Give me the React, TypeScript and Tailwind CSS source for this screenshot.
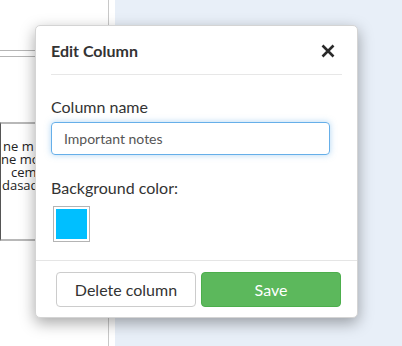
import React from "react";

export default function App() {
  return (
    <div className="relative w-[402px] h-[346px] overflow-hidden bg-white" style={{ fontFamily: "Lato, 'Open Sans', sans-serif" }}>
      {/* background page */}
      <div className="flex h-full">
        <div className="w-[109px] h-full border-r border-[#c8c8c8] bg-white flex flex-col">
          <div className="h-[50px]" />
          <div className="h-[7px] border-y border-[#b5b5b5]" />
          <div className="h-[65px]" />
          <div className="h-[119px] border-y-[2px] border-[#b8b8b8] border-l border-l-[#555] pt-[16px]">
            <div className="w-[34px] overflow-hidden text-[13px] leading-[13px] text-[#222]" style={{ fontFamily: "'Open Sans', sans-serif" }}>
              <div className="whitespace-nowrap pl-[2px]">ne m</div>
              <div className="whitespace-nowrap">ne mo</div>
              <div className="whitespace-nowrap pl-[10px]">cem</div>
              <div className="whitespace-nowrap pl-[1px]">dasad</div>
            </div>
          </div>
        </div>
        <div className="w-[6px] bg-white" />
        <div className="flex-1 h-full bg-[#e8eff8]" />
      </div>

      {/* modal */}
      <div className="absolute left-[35px] top-[25px] w-[323px] bg-white rounded-[5px] border border-[#d4d4d4] shadow-[0_5px_15px_rgba(0,0,0,0.35)]">
        <div className="mx-[15px] border-b border-[#e7e7e7] pt-[15px] pb-[13px] flex items-center justify-between">
          <span className="text-[16px] leading-[20px] font-bold text-[#333]">Edit Column</span>
          <svg width="14" height="14" viewBox="0 0 14 14" className="mr-[7px]">
            <path d="M1.5 1.5 L12.5 12.5 M12.5 1.5 L1.5 12.5" stroke="#2a2a2a" strokeWidth="2.6" strokeLinecap="butt" />
          </svg>
        </div>
        <div className="px-[15px] pt-[22px] pb-[18px]">
          <div className="text-[16px] leading-[20px] text-[#333]">Column name</div>
          <div className="mt-[5px] w-[279px] h-[33px] rounded-[4px] border border-[#66afe9] shadow-[0_0_6px_rgba(102,175,233,0.5)] flex items-center pl-[12px] text-[14px] text-[#555]">
            Important notes
          </div>
          <div className="mt-[23px] text-[16px] leading-[20px] text-[#333]">Background color:</div>
          <div className="mt-[8px] ml-[2px] w-[37px] h-[36px] border border-[#b4b4b4] p-[2px] bg-white">
            <div className="w-full h-full bg-[#00bfff]" />
          </div>
        </div>
        <div className="border-t border-[#e5e5e5] pt-[11px] pb-[10px] pl-[20px] flex gap-[5px]">
          <div className="w-[140px] h-[35px] rounded-[4px] border border-[#cccccc] bg-white flex items-center justify-center text-[16px] text-[#333]">
            Delete column
          </div>
          <div className="w-[140px] h-[35px] rounded-[4px] border border-[#4cae4c] bg-[#5cb85c] flex items-center justify-center text-[16px] text-white">
            Save
          </div>
        </div>
      </div>
    </div>
  );
}
